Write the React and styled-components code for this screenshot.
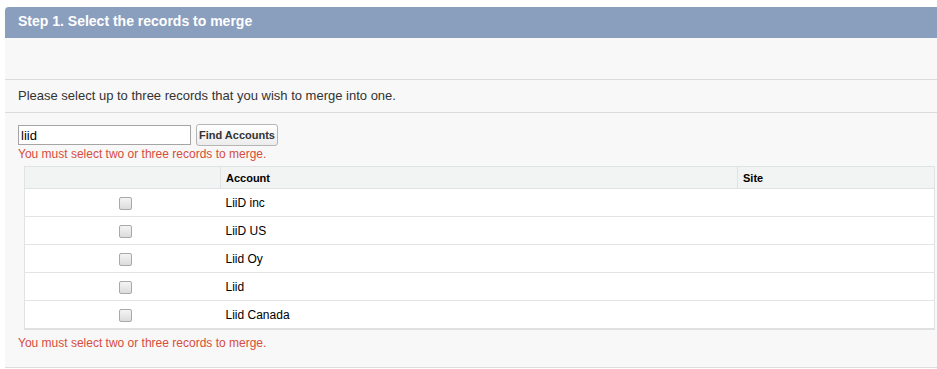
import React from "react";
import styled, { createGlobalStyle } from "styled-components";

const Global = createGlobalStyle`
  html, body { margin: 0; padding: 0; overflow: hidden; background: #fff; }
  body { font-family: Arial, "Liberation Sans", sans-serif; color: #333; }
`;

const Page = styled.div`
  padding: 7px 0 0 5px;
  width: 960px;
`;

const Panel = styled.div`
  width: 945px;
  background: #f8f8f8;
  border-bottom: 1px solid #dddddd;
`;

const Header = styled.div`
  height: 31px;
  background: #8a9ebe;
  border-radius: 4px 0 0 0;
  color: #fff;
  font-weight: bold;
  font-size: 14px;
  line-height: 29px;
  padding-left: 13px;
`;

const Spacer = styled.div`
  height: 41px;
  border-bottom: 1px solid #dcdcdc;
`;

const Instruction = styled.div`
  height: 32px;
  line-height: 32px;
  padding-left: 13px;
  font-size: 13px;
  color: #333;
  border-bottom: 1px solid #dcdcdc;
`;

const Body = styled.div`
  padding: 11px 0 17px 13px;
`;

const SearchRow = styled.div`
  display: flex;
  align-items: center;
  gap: 5px;
`;

const TextInput = styled.input`
  box-sizing: border-box;
  width: 173px;
  height: 20px;
  border: 1px solid #a5a5a5;
  padding: 0 2px;
  font-family: Arial, "Liberation Sans", sans-serif;
  font-size: 13px;
  color: #000;
  background: #fff;
  outline: none;
`;

const Button = styled.button`
  box-sizing: border-box;
  height: 22px;
  width: 82px;
  padding: 0;
  border: 1px solid #b5b5b5;
  border-radius: 3px;
  background: linear-gradient(#ffffff, #ececec);
  font-family: Arial, "Liberation Sans", sans-serif;
  font-weight: bold;
  font-size: 11px;
  color: #333;
`;

const Error = styled.div`
  color: #d74c3b;
  font-size: 12px;
  line-height: 14px;
  margin-top: ${(p) => p.$top || 0}px;
`;

const Table = styled.table`
  margin: 5px 0 0 6px;
  width: 911px;
  border-collapse: collapse;
  background: #fff;
  border: 1px solid #e0e3e5;
  border-bottom: 2px solid #dfe0e1;
  font-size: 12px;
  color: #000;
`;

const Th = styled.th`
  background: #f2f3f3;
  height: 21px;
  padding: 0 0 0 5px;
  text-align: left;
  font-size: 11px;
  font-weight: bold;
  color: #000;
  border-left: 1px solid #e0e3e5;
  border-bottom: 1px solid #e0e3e5;
  width: ${(p) => p.$w}px;
  &:first-child { border-left: none; }
`;

const Td = styled.td`
  height: 27px;
  padding: 0 0 0 5px;
  border-bottom: 1px solid #e3e3e3;
  text-align: ${(p) => (p.$center ? "center" : "left")};
  vertical-align: middle;
  tr:last-child > & { border-bottom: none; }
`;

const Check = styled.input.attrs({ type: "checkbox" })`
  appearance: none;
  -webkit-appearance: none;
  box-sizing: border-box;
  width: 13px;
  height: 13px;
  margin: 1px 0 0 0;
  border: 1px solid #a9a9a9;
  border-radius: 2px;
  background: linear-gradient(#f4f4f4, #dcdcdc);
  vertical-align: middle;
`;

const rows = ["LiiD inc", "LiiD US", "Liid Oy", "Liid", "Liid Canada"];

export default function App() {
  return (
    <Page>
      <Global />
      <Panel>
        <Header>Step 1. Select the records to merge</Header>
        <Spacer />
        <Instruction>Please select up to three records that you wish to merge into one.</Instruction>
        <Body>
          <SearchRow>
            <TextInput defaultValue="liid" />
            <Button>Find Accounts</Button>
          </SearchRow>
          <Error $top={1}>You must select two or three records to merge.</Error>
          <Table>
            <thead>
              <tr>
                <Th $w={190} />
                <Th $w={511}>Account</Th>
                <Th>Site</Th>
              </tr>
            </thead>
            <tbody>
              {rows.map((r) => (
                <tr key={r}>
                  <Td $center>
                    <Check />
                  </Td>
                  <Td>{r}</Td>
                  <Td />
                </tr>
              ))}
            </tbody>
          </Table>
          <Error $top={6}>You must select two or three records to merge.</Error>
        </Body>
      </Panel>
    </Page>
  );
}
